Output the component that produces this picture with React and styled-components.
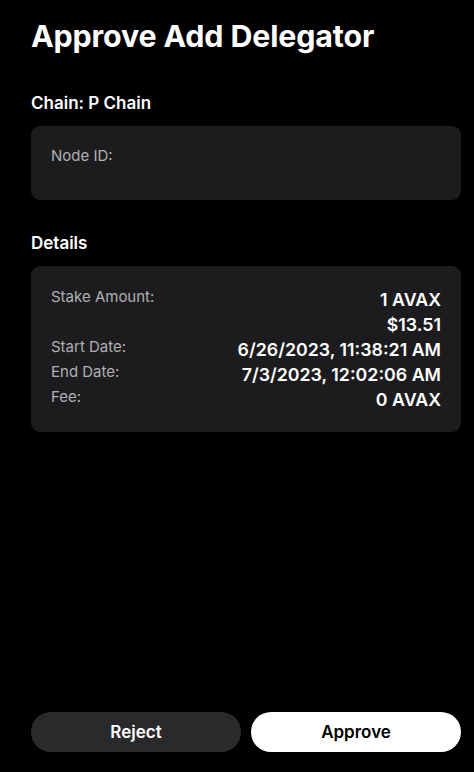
import styled, { createGlobalStyle } from "styled-components";

const GlobalStyle = createGlobalStyle`
  html, body {
    margin: 0;
    padding: 0;
    background: #000000;
  }
  body {
    font-family: Inter, "Noto Sans", sans-serif;
    color: #ffffff;
  }
  #root {
    min-height: 100vh;
  }
`;

const Page = styled.div`
  display: flex;
  flex-direction: column;
  box-sizing: border-box;
  height: 772px;
  padding: 16px 13px 20px 31px;
`;

const Title = styled.h1`
  margin: 0;
  font-size: 30.4px;
  line-height: 40px;
  font-weight: 700;
  letter-spacing: -0.15px;
`;

const SectionLabel = styled.h2`
  margin: ${(props) => props.$top || "0"} 0 0;
  font-size: 17px;
  line-height: 20px;
  font-weight: 600;
`;

const Card = styled.div`
  box-sizing: border-box;
  margin-top: 13px;
  background: #1c1c1e;
  border-radius: 9px;
  padding: ${(props) => props.$padding || "20px"};
  min-height: ${(props) => props.$minHeight || "auto"};
`;

const Label = styled.span`
  margin-top: -2px;
  font-size: 15px;
  line-height: 20px;
  color: #b0b0b4;
`;

const DetailGrid = styled.div`
  display: grid;
  grid-template-columns: auto 1fr;
  row-gap: 4px;
  align-items: start;
`;

const Value = styled.span`
  grid-column: 2;
  text-align: right;
  font-size: 17.8px;
  line-height: 21px;
  font-weight: 600;
  color: #ffffff;
`;

const Spacer = styled.div`
  flex: 1;
`;

const ButtonRow = styled.div`
  display: grid;
  grid-template-columns: 1fr 1fr;
  gap: 10px;
`;

const Button = styled.button`
  height: 40px;
  border: none;
  border-radius: 20px;
  font-family: Inter, "Noto Sans", sans-serif;
  font-size: 17px;
  font-weight: 600;
  cursor: pointer;
  background: ${(props) => (props.$primary ? "#ffffff" : "#2a2a2c")};
  color: ${(props) => (props.$primary ? "#000000" : "#ffffff")};
`;

const details = [
  { label: "Stake Amount:", values: ["1 AVAX", "$13.51"] },
  { label: "Start Date:", values: ["6/26/2023, 11:38:21 AM"] },
  { label: "End Date:", values: ["7/3/2023, 12:02:06 AM"] },
  { label: "Fee:", values: ["0 AVAX"] },
];

export default function App() {
  return (
    <>
      <GlobalStyle />
      <Page>
        <Title>Approve Add Delegator</Title>
        <SectionLabel $top="37px">Chain: P Chain</SectionLabel>
        <Card $minHeight="74px" $padding="19px 20px 20px">
          <Label>Node ID:</Label>
        </Card>
        <SectionLabel $top="33px">Details</SectionLabel>
        <Card $padding="23px 20px 22px">
          <DetailGrid>
            {details.map((d) =>
              d.values.map((v, i) => (
                <>
                  {i === 0 ? <Label key={d.label}>{d.label}</Label> : null}
                  <Value key={v}>{v}</Value>
                </>
              ))
            )}
          </DetailGrid>
        </Card>
        <Spacer />
        <ButtonRow>
          <Button>Reject</Button>
          <Button $primary>Approve</Button>
        </ButtonRow>
      </Page>
    </>
  );
}
